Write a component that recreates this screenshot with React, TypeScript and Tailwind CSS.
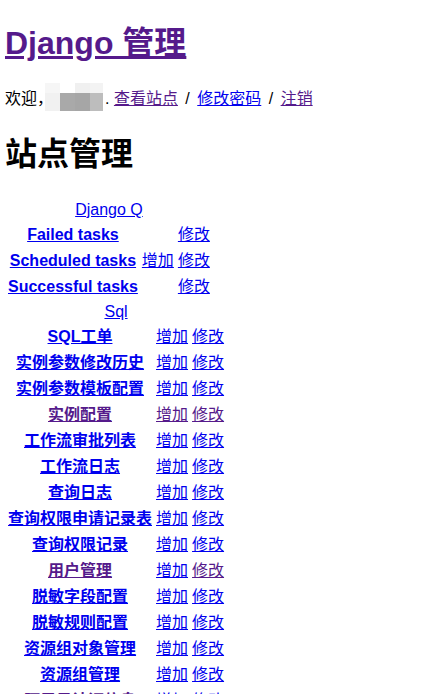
const BLUE = 'text-[#0000ee]';
const PURPLE = 'text-[#551a8b]';

type Model = {
  name: string;
  add: boolean;
  seen?: boolean;
  addSeen?: boolean;
  changeSeen?: boolean;
};

type AppModule = {
  label: string;
  models: Model[];
};

const apps: AppModule[] = [
  {
    label: 'Django Q',
    models: [
      { name: 'Failed tasks', add: false },
      { name: 'Scheduled tasks', add: true },
      { name: 'Successful tasks', add: false },
    ],
  },
  {
    label: 'Sql',
    models: [
      { name: 'SQL工单', add: true },
      { name: '实例参数修改历史', add: true },
      { name: '实例参数模板配置', add: true },
      { name: '实例配置', add: true, seen: true, addSeen: true, changeSeen: true },
      { name: '工作流审批列表', add: true },
      { name: '工作流日志', add: true },
      { name: '查询日志', add: true },
      { name: '查询权限申请记录表', add: true },
      { name: '查询权限记录', add: true },
      { name: '用户管理', add: true, seen: true, changeSeen: true },
      { name: '脱敏字段配置', add: true },
      { name: '脱敏规则配置', add: true },
      { name: '资源组对象管理', add: true },
      { name: '资源组管理', add: true },
      { name: '阿里云认证信息', add: true, seen: true },
    ],
  },
];

function Link({ seen, children }: { seen?: boolean; children: React.ReactNode }) {
  return (
    <a href="#" className={`underline ${seen ? PURPLE : BLUE}`}>
      {children}
    </a>
  );
}

function Sep() {
  return <span className="px-[3px]"> / </span>;
}

// pixelated username
function BlurredName() {
  const cells = [
    'bg-[#f6f6f6]', 'bg-white', 'bg-[#f0f0f0]', 'bg-[#f3f3f3]',
    'bg-[#f1f1f1]', 'bg-[#a9a9a9]', 'bg-[#a6a6a6]', 'bg-[#bdbdbd]',
  ];
  return (
    <span className="inline-grid grid-cols-[15px_15px_15px_13px] grid-rows-[10px_18px] align-middle ml-[-8px] mr-[2px] -mt-[6px]">
      {cells.map((c, i) => (
        <span key={i} className={c} />
      ))}
    </span>
  );
}

export default function App() {
  return (
    <div className="bg-white text-black min-h-[694px] pl-[5px] text-[16px] leading-[22px] font-['Liberation_Sans','Noto_Sans_CJK_SC',sans-serif] overflow-hidden">
      <div id="header">
        <h1 className="text-[32px] leading-[45px] font-bold mt-[21px] mb-[22px]">
          <Link seen>Django 管理</Link>
        </h1>
        <div className="whitespace-nowrap">
          欢迎，
          <BlurredName />
          . <Link seen>查看站点</Link>
          <Sep />
          <Link>修改密码</Link>
          <Sep />
          <Link seen>注销</Link>
        </div>
      </div>

      <div id="content">
        <h1 className="text-[32px] leading-[45px] font-bold mt-[21px] mb-[22px]">站点管理</h1>

        <div id="content-main">
          {apps.map((app) => (
            <div key={app.label}>
              <table className="border-separate border-spacing-[2px] -mt-[2px]">
                <caption className="text-center leading-[22px] pt-[2px]">
                  <Link>{app.label}</Link>
                </caption>
                <tbody>
                  {app.models.map((m) => (
                    <tr key={m.name}>
                      <th scope="row" className="p-px text-center font-bold whitespace-nowrap">
                        <Link seen={m.seen}>{m.name}</Link>
                      </th>
                      <td className="p-px whitespace-nowrap">
                        {m.add && <Link seen={m.addSeen}>增加</Link>}
                      </td>
                      <td className="p-px whitespace-nowrap">
                        <Link seen={m.changeSeen}>修改</Link>
                      </td>
                    </tr>
                  ))}
                </tbody>
              </table>
            </div>
          ))}
        </div>
      </div>
    </div>
  );
}
